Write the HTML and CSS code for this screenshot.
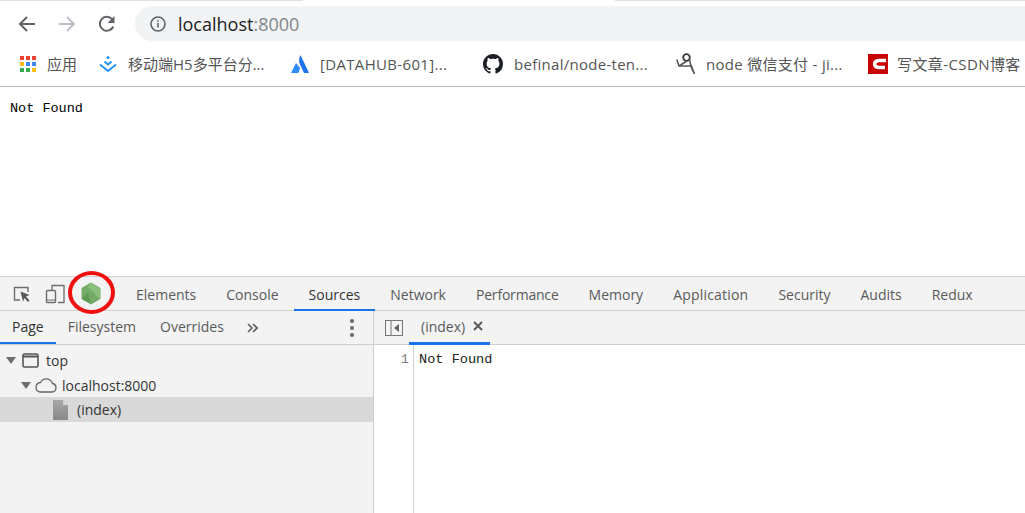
FILE: index.html
```html
<!DOCTYPE html>
<html lang="en">
<head>
  <meta charset="UTF-8" />
  <title>localhost:8000</title>
  <link rel="stylesheet" href="styles.css">
</head>
<body>
  <!-- Browser chrome -->
  <div class="tabstrip">
    <div class="strip strip-left"></div>
    <div class="strip strip-right"></div>
  </div>
  <div class="toolbar">
    <svg class="nav-icon" width="20" height="20" viewBox="0 0 20 20"><path d="M18 10H3M10 3l-7 7 7 7" fill="none" stroke="#5f6368" stroke-width="2"/></svg>
    <svg class="nav-icon" width="20" height="20" viewBox="0 0 20 20"><path d="M2 10h15M10 3l7 7-7 7" fill="none" stroke="#bdc1c6" stroke-width="2"/></svg>
    <svg class="nav-icon" width="20" height="20" viewBox="0 0 20 20"><path d="M16.3 12.5A7 7 0 1 1 15 5" fill="none" stroke="#5f6368" stroke-width="2"/><path d="M17.5 2v7h-7z" fill="#5f6368"/></svg>
    <div class="omnibox">
      <svg width="16" height="16" viewBox="0 0 16 16"><circle cx="8" cy="8" r="7" fill="none" stroke="#5f6368" stroke-width="1.6"/><path d="M7.2 7h1.6v4.6H7.2zM7.2 4.2h1.6v1.6H7.2z" fill="#5f6368"/></svg>
      <span class="host">localhost<span class="port">:8000</span></span>
    </div>
  </div>

  <div class="bookmarks">
    <div class="bookmark bm-apps">
      <svg width="16" height="16" viewBox="0 0 16 16">
        <rect x="0" y="0" width="4" height="4" fill="#ea4335"/><rect x="6" y="0" width="4" height="4" fill="#ea4335"/><rect x="12" y="0" width="4" height="4" fill="#ea4335"/>
        <rect x="0" y="6" width="4" height="4" fill="#fbbc05"/><rect x="6" y="6" width="4" height="4" fill="#4285f4"/><rect x="12" y="6" width="4" height="4" fill="#4285f4"/>
        <rect x="0" y="12" width="4" height="4" fill="#34a853"/><rect x="6" y="12" width="4" height="4" fill="#34a853"/><rect x="12" y="12" width="4" height="4" fill="#fbbc05"/>
      </svg>
      <span>应用</span>
    </div>
    <div class="bookmark bm-h5">
      <svg width="18" height="16" viewBox="0 0 18 16"><circle cx="9" cy="1.500" r="1.500" fill="#1e90f5"/><path d="M5.500 5.500L9 8.500l3.500-3M1 8.500L9 15l8-6.500" fill="none" stroke="#1e90f5" stroke-width="1.800"/></svg>
      <span>移动端H5多平台分...</span>
    </div>
    <div class="bookmark bm-jira">
      <svg width="18" height="18" viewBox="0 0 18 18"><path d="M9.500 0C7.500 3.500 7.500 7 9.500 10.500L13 18h5z" fill="#1e73e8"/><path d="M5 8L0 18h7.500L9 13z" fill="#2d8cff"/></svg>
      <span>[DATAHUB-601]...</span>
    </div>
    <div class="bookmark bm-github">
      <svg width="20" height="20" viewBox="0 0 16 16"><path fill="#1b1f23" d="M8 0C3.58 0 0 3.58 0 8c0 3.54 2.29 6.53 5.47 7.59.4.07.55-.17.55-.38 0-.19-.01-.82-.01-1.49-2.01.37-2.53-.49-2.69-.94-.09-.23-.48-.94-.82-1.13-.28-.15-.68-.52-.01-.53.63-.01 1.08.58 1.23.82.72 1.21 1.87.87 2.33.66.07-.52.28-.87.51-1.07-1.78-.2-3.64-.89-3.64-3.95 0-.87.31-1.59.82-2.15-.08-.2-.36-1.02.08-2.12 0 0 .67-.21 2.2.82.64-.18 1.32-.27 2-.27s1.36.09 2 .27c1.53-1.04 2.2-.82 2.2-.82.44 1.1.16 1.92.08 2.12.51.56.82 1.27.82 2.15 0 3.07-1.87 3.75-3.65 3.95.29.25.54.73.54 1.48 0 1.07-.01 1.93-.01 2.2 0 .21.15.46.55.38A8.01 8.01 0 0 0 16 8c0-4.42-3.58-8-8-8z"/></svg>
      <span>befinal/node-ten...</span>
    </div>
    <div class="bookmark bm-node">
      <svg width="19" height="21" viewBox="0 0 19 21"><circle cx="10.500" cy="4.500" r="3.300" fill="none" stroke="#3a3a3a" stroke-width="1.800"/><path d="M13.500 5.500C14 11 15.500 16 18.500 21L15.500 13H3L.8 6.500" fill="none" stroke="#555" stroke-width="1.500"/><path d="M3 13l8-5" stroke="#555" stroke-width="1.500"/></svg>
      <span>node 微信支付 - ji...</span>
    </div>
    <div class="bookmark bm-csdn">
      <svg width="20" height="20" viewBox="0 0 20 20"><rect width="20" height="20" fill="#c90000"/><path d="M18 6.500H12C5 6 4.500 14 12 13.500H17" fill="none" stroke="#fff" stroke-width="3.600"/></svg>
      <span>写文章-CSDN博客</span>
    </div>
  </div>

  <!-- Page content -->
  <div class="page">Not Found</div>

  <!-- DevTools -->
  <div class="devtools">
    <div class="dt-main-tabs">
      <div class="dt-tools">
        <svg width="20" height="20" viewBox="0 0 20 20"><path d="M8 16H2.500V3.500H16V8" fill="none" stroke="#6e6e6e" stroke-width="1.400"/><path d="M8.500 7.500l9 3.500-3.500 1.500 3.500 4-1.500 1.500-3.500-4-1.500 3.500z" fill="#5a5a5a"/></svg>
        <svg width="20" height="20" viewBox="0 0 20 20"><path d="M7 6V1.500h12v17h-6" fill="none" stroke="#6e6e6e" stroke-width="1.300"/><rect x="1.500" y="6.500" width="9" height="12" rx="1" fill="none" stroke="#6e6e6e" stroke-width="1.400"/><path d="M1.500 16h9" stroke="#6e6e6e"/></svg>
        <svg class="node-logo" width="20" height="23" viewBox="0 0 20 23"><path d="M10 1l9 5.200v10.600L10 22l-9-5.200V6.200z" fill="#75ab67" stroke="#75ab67" stroke-linejoin="round"/><path d="M10 1l9 5.200v10.600L7 5z" fill="#8cc07d"/><path d="M1 16.800L7 10l3 12z" fill="#619a57"/></svg>
      </div>
      <div class="dt-tab">Elements</div>
      <div class="dt-tab">Console</div>
      <div class="dt-tab active">Sources</div>
      <div class="dt-tab">Network</div>
      <div class="dt-tab tab-tight">Performance</div>
      <div class="dt-tab">Memory</div>
      <div class="dt-tab tab-wide">Application</div>
      <div class="dt-tab">Security</div>
      <div class="dt-tab">Audits</div>
      <div class="dt-tab">Redux</div>
    </div>
    <div class="dt-body">
      <div class="navigator">
        <div class="nav-tabs">
          <div class="nav-tab active">Page</div>
          <div class="nav-tab">Filesystem</div>
          <div class="nav-tab">Overrides</div>
          <svg class="nav-more" width="11" height="10" viewBox="0 0 11 10"><path d="M1 1l4 4-4 4M6 1l4 4-4 4" fill="none" stroke="#5a5a5a" stroke-width="1.600"/></svg>
          <div class="nav-menu"><i></i><i></i><i></i></div>
        </div>
        <div class="tree">
          <div class="row row-top">
            <span class="arrow"></span>
            <svg width="18" height="15" viewBox="0 0 18 15"><rect x="1" y="1" width="15" height="13" rx="1.500" fill="none" stroke="#555" stroke-width="1.600"/><path d="M1 3.500h15" stroke="#555" stroke-width="2"/></svg>
            <span>top</span>
          </div>
          <div class="row row-host">
            <span class="arrow"></span>
            <svg width="23" height="15" viewBox="0 0 23 15"><path d="M6 14h12a4.300 4.300 0 0 0 .5-8.500A6.500 6.500 0 0 0 6.500 4.500 4.800 4.800 0 0 0 6 14z" fill="none" stroke="#666" stroke-width="1.300"/></svg>
            <span>localhost:8000</span>
          </div>
          <div class="row row-file">
            <svg width="15" height="20" viewBox="0 0 15 20"><defs><linearGradient id="fileShade" x1="0" y1="0" x2="0" y2="1"><stop offset="0" stop-color="#a8a8a8"/><stop offset="1" stop-color="#888"/></linearGradient></defs><path d="M0 0h10l5 5v15H0z" fill="url(#fileShade)"/><path d="M10 0l5 5h-5z" fill="#d8d8d8"/></svg>
            <span>(index)</span>
          </div>
        </div>
      </div>
      <div class="editor">
        <div class="editor-tabs">
          <svg class="toggle" width="18" height="16" viewBox="0 0 18 16"><rect x=".5" y=".5" width="17" height="15" fill="none" stroke="#777"/><path d="M6 0v16" stroke="#777"/><path d="M14 4v8L9 8z" fill="#666"/></svg>
          <div class="file-tab">
            <span>(index)</span>
            <svg width="10" height="10" viewBox="0 0 10 10"><path d="M1 1l8 8M9 1l-8 8" stroke="#5a5a5a" stroke-width="2"/></svg>
          </div>
        </div>
        <div class="code">
          <div class="gutter">1</div>
          <div class="source">Not Found</div>
        </div>
      </div>
    </div>
  </div>

  <!-- Red annotation around the node icon -->
  <div class="annotation"></div>
</body>
</html>
```

FILE: styles.css
```css
* {
  margin: 0;
  padding: 0;
  box-sizing: border-box;
}

body {
  width: 1025px;
  height: 513px;
  overflow: hidden;
  position: relative;
  background-color: #fff;
  font-family: "Open Sans", "Noto Sans CJK SC", sans-serif;
  color: #333;
}

/* Browser chrome */
.tabstrip {
  display: flex;
  justify-content: space-between;
  height: 1px;
}

.strip {
  background-color: #dee1e6;
}

.strip-left {
  width: 303px;
}

.strip-right {
  width: 410px;
}

.toolbar {
  display: flex;
  align-items: center;
  height: 40px;
  padding: 5px 0 0 17px;
  gap: 20px;
}

.omnibox {
  display: flex;
  align-items: center;
  gap: 12px;
  flex: 1;
  height: 35px;
  margin-left: -2px;
  padding-left: 15px;
  background-color: #f1f3f4;
  border-radius: 18px 0 0 18px;
}

.host {
  font-size: 18px;
  color: #202124;
}

.port {
  color: #80868b;
}

.bookmarks {
  display: flex;
  align-items: center;
  height: 46px;
  border-bottom: 1px solid #b8b8b8;
  font-size: 15px;
  color: #555;
  white-space: nowrap;
}

.bookmark {
  display: flex;
  align-items: center;
  gap: 11px;
}

.bm-apps {
  margin-left: 20px;
  width: 79px;
}

.bm-h5 {
  width: 192px;
}

.bm-jira {
  width: 192px;
  letter-spacing: 0.33px;
}

.bm-github {
  width: 193px;
  letter-spacing: 0.28px;
}

.bm-node {
  width: 192px;
  letter-spacing: 0.3px;
}

.bm-csdn {
  letter-spacing: 0.4px;
  gap: 9px;
}

/* Page content */
.page {
  height: 189px;
  padding: 14px 10px;
  font-family: "Liberation Mono", monospace;
  font-size: 13.500px;
  line-height: 16px;
  color: #000;
}

/* DevTools */
.devtools {
  height: 237px;
  border-top: 1px solid #cfcfcf;
  background-color: #f3f3f3;
  font-size: 14px;
}

.dt-main-tabs {
  display: flex;
  height: 34px;
  border-bottom: 1px solid #cfcfcf;
}

.dt-tools {
  display: flex;
  align-items: center;
  width: 121px;
  padding-left: 12px;
  gap: 13px;
}

.node-logo {
  margin-left: 3px;
}

.dt-tab {
  padding: 1px 15px 0;
  line-height: 33px;
  color: #5a5a5a;
}

.tab-tight {
  letter-spacing: -0.2px;
}

.tab-wide {
  letter-spacing: 0.2px;
}

.dt-tab.active {
  color: #333;
  border-bottom: 2px solid #1a73e8;
  height: 34px;
}

.dt-body {
  display: flex;
  height: 202px;
}

.navigator {
  width: 374px;
  border-right: 1px solid #cfcfcf;
}

.nav-tabs {
  display: flex;
  align-items: center;
  height: 34px;
  border-bottom: 1px solid #cfcfcf;
  color: #5a5a5a;
}

.nav-tab {
  padding: 0 12px;
  line-height: 32px;
  height: 33px;
}

.nav-tab.active {
  color: #333;
  border-bottom: 2px solid #1a73e8;
}

.nav-more {
  margin-left: 11px;
}

.nav-menu {
  display: flex;
  flex-direction: column;
  gap: 3px;
  margin-left: auto;
  margin-right: 19px;
}

.nav-menu i {
  width: 4px;
  height: 4px;
  border-radius: 50%;
  background-color: #666;
}

.tree {
  padding-top: 3px;
}

.row {
  display: flex;
  align-items: center;
  height: 25px;
}

.arrow {
  width: 0;
  height: 0;
  border-left: 5px solid transparent;
  border-right: 5px solid transparent;
  border-top: 7px solid #6e6e6e;
}

.row-top {
  padding-left: 6px;
  gap: 6px;
}

.row-host {
  height: 24px;
  padding-left: 21px;
  gap: 3px;
}

.row-host span:last-child {
  margin-left: 2px;
}

.row-file {
  padding-left: 53px;
  gap: 9px;
  background-color: #d9d9d9;
}

.editor {
  flex: 1;
}

.editor-tabs {
  display: flex;
  align-items: center;
  height: 34px;
  border-bottom: 1px solid #cfcfcf;
  padding-left: 11px;
}

.file-tab {
  display: flex;
  align-items: center;
  gap: 8px;
  margin-left: 6px;
  padding: 0 6px 0 12px;
  height: 34px;
  width: 81px;
  border-bottom: 3px solid #1a73e8;
  color: #5a5a5a;
}

.code {
  display: flex;
  height: 168px;
  background-color: #fff;
  font-family: "Liberation Mono", monospace;
  font-size: 13.600px;
}

.gutter {
  width: 40px;
  padding: 7px 4px 0 0;
  text-align: right;
  color: #808080;
  border-right: 1px solid #d0d0d0;
}

.source {
  padding: 7px 0 0 5px;
  color: #222;
}

/* Annotation */
.annotation {
  position: absolute;
  left: 68px;
  top: 271px;
  width: 47px;
  height: 43px;
  border: 4px solid #f01010;
  border-radius: 50%;
}
```
